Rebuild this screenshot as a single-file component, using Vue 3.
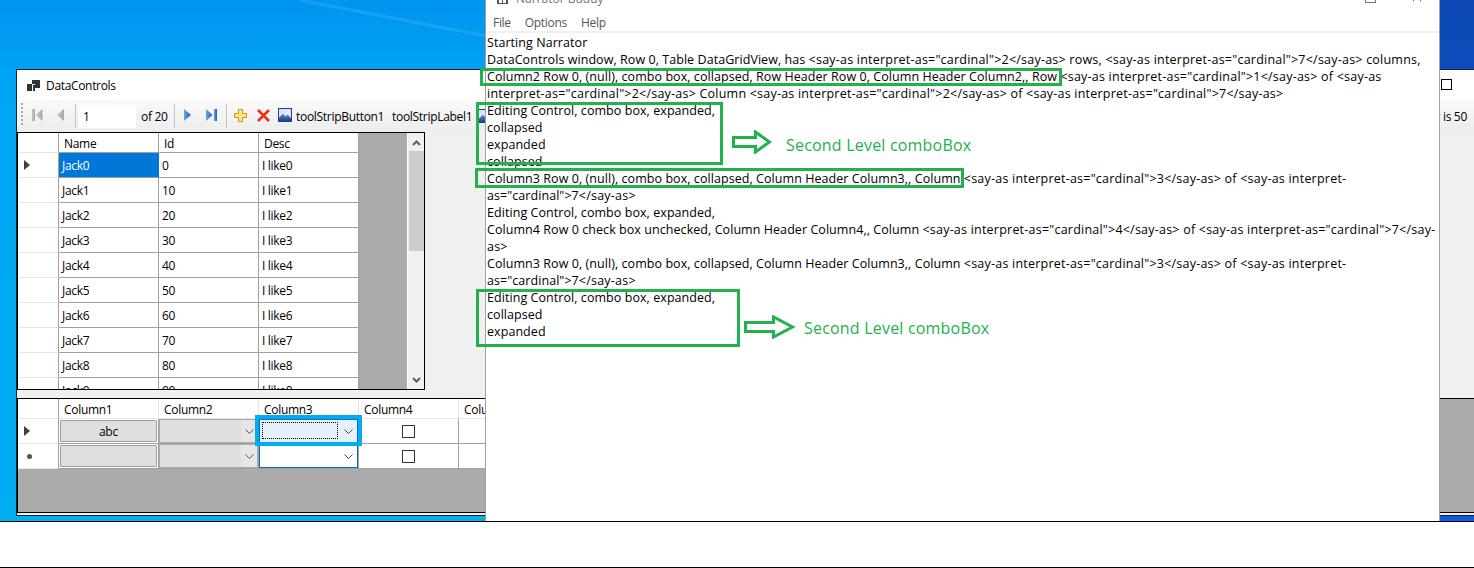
<script setup>
const rows = Array.from({ length: 10 }, (_, i) => ({ name: 'Jack' + i, id: String(i * 10), desc: 'I like' + i }))
const logA = [
  'Starting Narrator',
  'DataControls window, Row 0, Table DataGridView, has <say-as interpret-as="cardinal">2</say-as> rows, <say-as interpret-as="cardinal">7</say-as> columns,',
  'Column2 Row 0, (null), combo box, collapsed, Row Header Row 0, Column Header Column2,, Row <say-as interpret-as="cardinal">1</say-as> of <say-as',
  'interpret-as="cardinal">2</say-as> Column <say-as interpret-as="cardinal">2</say-as> of <say-as interpret-as="cardinal">7</say-as>',
  'Editing Control, combo box, expanded,',
  'collapsed',
  'expanded',
  'collapsed',
  'Column3 Row 0, (null), combo box, collapsed, Column Header Column3,, Column <say-as interpret-as="cardinal">3</say-as> of <say-as interpret-',
  'as="cardinal">7</say-as>',
  'Editing Control, combo box, expanded,',
  'Column4 Row 0 check box unchecked, Column Header Column4,, Column <say-as interpret-as="cardinal">4</say-as> of <say-as interpret-as="cardinal">7</say-',
  'as>',
  'Column3 Row 0, (null), combo box, collapsed, Column Header Column3,, Column <say-as interpret-as="cardinal">3</say-as> of <say-as interpret-',
  'as="cardinal">7</say-as>',
  'Editing Control, combo box, expanded,',
  'collapsed',
  'expanded'
]
// The markup fragments of the log run a little wider than its prose.
const logLines = logA.map((line) => {
  const at = line.indexOf('<')
  return at < 0 && !line.startsWith('as') && !line.startsWith('interpret')
    ? { prose: line, markup: '' }
    : { prose: at < 0 ? '' : line.slice(0, line.startsWith('interpret') ? 0 : at), markup: at < 0 ? line : line.slice(line.startsWith('interpret') ? 0 : at) }
})
</script>

<template>
  <div class="screen">
    <div class="desktop">
      <svg class="streak" width="486" height="60" viewBox="0 0 486 60"><path d="M300 0L486 36" stroke="#fff" stroke-opacity=".1" stroke-width="3" fill="none"/></svg>
      <section class="win data">
        <header class="title">
          <svg class="appicon" width="13" height="11" viewBox="0 0 13 11"><path d="M0 4h5v7H0zM5 0h8v8H8V4H5z" fill="#333"/><path d="M6 5h2v6H6z" fill="#333"/></svg>
          <span class="ttl">DataControls</span>
          <i class="topbox"></i>
        </header>
        <div class="strip">
          <svg width="0" height="0" class="defs"><defs>
            <linearGradient id="navblue" x1="0" y1="0" x2="1" y2="0"><stop offset="0" stop-color="#6aa6e8"/><stop offset="1" stop-color="#1a5cb8"/></linearGradient>
            <linearGradient id="navgrey" x1="0" y1="0" x2="1" y2="0"><stop offset="0" stop-color="#c4c4c4"/><stop offset="1" stop-color="#a8a8a8"/></linearGradient>
            <linearGradient id="sky" x1="0" y1="0" x2="0" y2="1"><stop offset="0" stop-color="#cfe0f5"/><stop offset="1" stop-color="#f4f8fd"/></linearGradient>
            <linearGradient id="hill" x1="0" y1="0" x2="0" y2="1"><stop offset="0" stop-color="#6d93c8"/><stop offset="1" stop-color="#1f3f86"/></linearGradient>
          </defs></svg>
          <i class="grip"></i>
          <svg class="tb first" width="11" height="12" viewBox="0 0 11 12"><path d="M0 0h3v12H0z" fill="url(#navgrey)"/><path d="M10.5 0v12L4 6z" fill="url(#navgrey)"/></svg>
          <svg class="tb prev" width="7" height="12" viewBox="0 0 7 12"><path d="M7 0v12L0 6z" fill="url(#navgrey)"/></svg>
          <i class="sep s1"></i>
          <span class="pos">1</span>
          <span class="of">of 20</span>
          <i class="sep s2"></i>
          <svg class="tb next" width="7" height="12" viewBox="0 0 7 12"><path d="M0 0v12l7-6z" fill="url(#navblue)"/></svg>
          <svg class="tb last" width="11" height="12" viewBox="0 0 11 12"><path d="M0 0v12l6.500-6z" fill="url(#navblue)"/><path d="M8 0h3v12H8z" fill="url(#navblue)"/></svg>
          <i class="sep s3"></i>
          <svg class="tb plus" width="13" height="13" viewBox="0 0 13 13"><path d="M4.500.5h4v4h4v4h-4v4h-4v-4h-4v-4h4z" fill="#fde58a" stroke="#cf9412"/></svg>
          <svg class="tb cross" width="13" height="13" viewBox="0 0 13 13"><path d="M1 1l11 11M12 1L1 12" stroke="#e8301c" stroke-width="2.700"/></svg>
          <svg class="tb pict" width="14" height="14" viewBox="0 0 14 14"><rect x=".5" y=".5" width="13" height="13" fill="url(#sky)" stroke="#1f3f86"/><path d="M1 13V9.500l4-4 2.500 3 2-2L13 10v3z" fill="url(#hill)"/><circle cx="10" cy="3.800" r="1.300" fill="#fff"/></svg>
          <span class="tl b1">toolStripButton1</span>
          <span class="tl l1">toolStripLabel1</span>
          <svg class="tb pict2" width="14" height="14" viewBox="0 0 14 14"><rect x=".5" y=".5" width="13" height="13" fill="url(#sky)" stroke="#1f3f86"/><path d="M1 13V9.500l4-4 2.500 3 2-2L13 10v3z" fill="url(#hill)"/></svg>
          <span class="counter">Counter is 50</span>
        </div>

        <div class="body">
          <div class="grid1">
            <div class="table1">
              <div class="cell rh hd"></div>
              <div class="cell hd">Name</div>
              <div class="cell hd">Id</div>
              <div class="cell hd">Desc</div>
              <template v-for="(r, i) in rows" :key="r.name">
                <div class="cell rh"><i v-if="i === 0" class="tri"></i></div>
                <div class="cell" :class="{ sel: i === 0 }">{{ r.name }}</div>
                <div class="cell">{{ r.id }}</div>
                <div class="cell">{{ r.desc }}</div>
              </template>
            </div>
            <div class="fill"></div>
            <div class="scroll">
              <svg class="chev" width="9" height="6" viewBox="0 0 9 6"><path d="M1 5l3.500-3.500L8 5" fill="none" stroke="#606060" stroke-width="2"/></svg>
              <i class="thumb"></i>
              <span class="flex"></span>
              <svg class="chev" width="9" height="6" viewBox="0 0 9 6"><path d="M1 1l3.500 3.500L8 1" fill="none" stroke="#606060" stroke-width="2"/></svg>
            </div>
          </div>

          <div class="grid2">
            <div class="table2">
              <div class="cell2 rh hd"></div>
              <div class="cell2 hd">Column1</div>
              <div class="cell2 hd">Column2</div>
              <div class="cell2 hd">Column3</div>
              <div class="cell2 hd">Column4</div>
              <div class="cell2 hd">Column5</div>

              <div class="cell2 rh"><i class="tri"></i></div>
              <div class="cell2 pad"><span class="btn">abc</span></div>
              <div class="cell2 pad0">
                <span class="cbgrey"><span class="cbarrow"><svg width="9" height="5" viewBox="0 0 9 5"><path d="M.5.500l4 4 4-4" fill="none" stroke="#555"/></svg></span></span>
              </div>
              <div class="cell2 pad0">
                <span class="cbblue on"><span class="dots"></span><svg width="9" height="5" viewBox="0 0 9 5"><path d="M.5.500l4 4 4-4" fill="none" stroke="#444"/></svg></span>
              </div>
              <div class="cell2 mid"><i class="check"></i></div>
              <div class="cell2"></div>

              <div class="cell2 rh"><i class="star"></i></div>
              <div class="cell2 pad"><span class="btn"></span></div>
              <div class="cell2 pad0">
                <span class="cbgrey"><span class="cbarrow"><svg width="9" height="5" viewBox="0 0 9 5"><path d="M.5.500l4 4 4-4" fill="none" stroke="#555"/></svg></span></span>
              </div>
              <div class="cell2 pad0">
                <span class="cbblue"><svg width="9" height="5" viewBox="0 0 9 5"><path d="M.5.500l4 4 4-4" fill="none" stroke="#444"/></svg></span>
              </div>
              <div class="cell2 mid"><i class="check"></i></div>
              <div class="cell2"></div>
            </div>
          </div>
        </div>
      </section>

      <div class="focusmark"></div>

      <section class="win narrator">
        <div class="ntitle">
          <svg class="nicon" width="11" height="8" viewBox="0 0 11 8"><path d="M0 0h11v8H0z" fill="#555"/><path d="M2 1h3v6H2zM6 1h3v6H6z" fill="#fff"/></svg>
          <span>Narrator Buddy</span>
          <i class="wmax"></i>
          <svg class="wclose" width="10" height="5" viewBox="0 0 10 5"><path d="M1-4l8 8M9-4l-8 8" stroke="#555" fill="none"/></svg>
        </div>
        <nav class="menu"><span>File</span><span>Options</span><span>Help</span></nav>
        <div class="log">
          <div v-for="(l, i) in logLines" :key="i" class="line">{{ l.prose }}<span class="markup">{{ l.markup }}</span></div>
        </div>

        <i class="gbox g1"></i>
        <i class="gbox g2"></i>
        <i class="gbox g3"></i>
        <i class="gbox g4"></i>
        <svg class="arrow a1" width="40" height="24" viewBox="0 0 40 24"><path d="M1.500 7.500h22V2l14 10-14 10v-5.500h-22z" fill="none" stroke="#22b14c" stroke-width="3"/></svg>
        <svg class="arrow a2" width="52" height="24" viewBox="0 0 52 24"><path d="M1.500 7.500h28V2l19 10-19 10v-5.500h-28z" fill="none" stroke="#22b14c" stroke-width="3"/></svg>
        <span class="lab l-a">Second Level comboBox</span>
        <span class="lab l-b">Second Level comboBox</span>
      </section>
    </div>
    <div class="below"></div>
  </div>
</template>

<style>
html, body { margin: 0; background: #fff; }
</style>

<style scoped>
.screen { width: 1474px; height: 568px; position: relative; overflow: hidden; font-family: "Open Sans", "Noto Sans", sans-serif; font-size: 12px; color: #000; background: #fff; }
.desktop { height: 521px; position: relative; overflow: hidden; border-bottom: 1px solid #000;
  background:
    linear-gradient(#0094ee, #00a4f5 15%, #00aef2) left top / 486px 100% no-repeat,
    linear-gradient(#0c49b5, #0a5ce4) right top / 40px 100% no-repeat,
    #0a5ce4; }
.streak { position: absolute; left: 0; top: 0; }
.below { height: 45px; border-bottom: 1px solid #000; background: #fff; }

.win { position: absolute; box-sizing: border-box; }
.data { left: 16px; top: 69px; width: 1460px; height: 447px; background: #f0f0f0; border: 1px solid #222; border-right: 0; display: flex; flex-direction: column; }
.title { height: 30px; background: #fff; display: flex; align-items: center; padding-left: 10px; flex: none; }
.appicon { margin-right: 6px; }
.ttl { letter-spacing: -.33px; }
.topbox { position: absolute; left: 1424px; top: 9px; width: 9px; height: 9px; border: 1px solid #000; }

.strip { height: 32px; flex: none; position: relative; background: linear-gradient(#f9f9f9, #ededed); }
.defs { position: absolute; }
.grip { position: absolute; left: 4px; top: 3px; width: 2px; height: 24px; background: repeating-linear-gradient(#aaa 0 2px, transparent 2px 4px); }
.tb { position: absolute; }
.first { left: 15px; top: 9px; }
.prev { left: 40px; top: 9px; }
.next { left: 167px; top: 9px; }
.last { left: 189px; top: 9px; }
.plus { left: 217px; top: 9px; }
.cross { left: 240px; top: 9px; }
.pict { left: 261px; top: 8px; }
.pict2 { left: 461px; top: 9px; }
.sep { position: absolute; top: 4px; width: 1px; height: 24px; background: #c4c4c4; }
.s1 { left: 58px; } .s2 { left: 157px; } .s3 { left: 209px; }
.pos { position: absolute; left: 62px; top: 5px; width: 53px; height: 23px; background: #fff; padding-left: 4px; line-height: 23px; }
.of { position: absolute; left: 124px; top: 5px; line-height: 23px; letter-spacing: -.3px; }
.tl { position: absolute; top: 5px; line-height: 23px; letter-spacing: -.3px; white-space: nowrap; }
.b1 { left: 279px; } .l1 { left: 375px; }
.counter { position: absolute; right: 9px; top: 5px; line-height: 23px; letter-spacing: -.3px; }

.body { flex: 1; display: flex; flex-direction: column; align-items: flex-start; min-height: 0; }
.grid1 { width: 408px; height: 258px; box-sizing: border-box; border: 1px solid #000; display: flex; overflow: hidden; background: #ababab; }
.table1 { display: grid; grid-template-columns: 40px 100px 100px 100px; grid-auto-rows: 25px; grid-template-rows: 20px; background: #fff; padding-left: 1px; flex: none; align-self: flex-start; }
.fill { flex: 1; }
.cell { box-sizing: border-box; border-right: 1px solid #a0a0a0; border-bottom: 1px solid #a0a0a0; padding-left: 3px; line-height: 25px; letter-spacing: -.3px; white-space: nowrap; overflow: hidden; background: #fff; }
.cell.hd { padding-left: 5px; line-height: 21px; border-color: #e4e4e4; border-bottom-color: #a0a0a0; border-right-color: #a0a0a0; }
.rh { border-color: #e4e4e4 !important; position: relative; border-right-color: #a0a0a0 !important; }
.sel { background: #0078d7; color: #fff; border-right-color: #0078d7; }
.tri { position: absolute; left: 5px; top: 7px; width: 0; height: 0; border-left: 6px solid #404040; border-top: 5px solid transparent; border-bottom: 5px solid transparent; }
.scroll { width: 17px; flex: none; background: #f0f0f0; display: flex; flex-direction: column; align-items: center; padding: 7px 0 6px; box-sizing: border-box; border-left: 1px solid #fff; }
.chev { flex: none; }
.thumb { width: 15px; height: 100px; background: #cdcdcd; margin-top: 5px; }
.flex { flex: 1; }

.grid2 { margin-top: 8px; box-sizing: border-box; width: 100%; height: 115px; border: 1px solid #000; border-right: 0; background: #ababab; overflow: hidden; }
.table2 { display: grid; grid-template-columns: 40px 100px 100px 100px 100px 100px; grid-template-rows: 20px 25px 25px; background: #fff; width: 540px; padding-left: 1px; }
.cell2 { box-sizing: border-box; border-right: 1px solid #a0a0a0; border-bottom: 1px solid #a0a0a0; background: #fff; white-space: nowrap; overflow: hidden; position: relative; }
.cell2.hd { padding-left: 5px; line-height: 21px; letter-spacing: -.3px; border-bottom-color: #e4e4e4; border-right-color: #e4e4e4; }
.pad { padding: 1px; }
.btn { display: block; height: 100%; box-sizing: border-box; background: #dfdfdf; border: 1px solid #a0a0a0; border-radius: 1px; text-align: center; line-height: 22px; letter-spacing: -.2px; }
.pad0 { padding: 0; }
.cbgrey { display: flex; justify-content: flex-end; height: 100%; background: #dfdfdf; box-sizing: border-box; border: 1px solid #ababab; }
.cbarrow { width: 16px; background: #e6e6e6; display: flex; align-items: center; justify-content: center; }
.cbblue { display: flex; align-items: center; justify-content: flex-end; height: 100%; box-sizing: border-box; border: 1px solid #0d6cbf; padding-right: 4px; }
.cbblue.on { background: #e5f1fb; position: relative; }
.dots { position: absolute; left: 2px; top: 2px; width: 76px; height: 17px; box-sizing: border-box; border: 1px dotted #000; }
.mid { display: flex; align-items: center; justify-content: center; }
.check { width: 11px; height: 11px; border: 1px solid #333; }
.star { position: absolute; left: 8px; top: 10px; width: 5px; height: 5px; border-radius: 50%; background: #555; }

.focusmark { position: absolute; left: 255px; top: 415px; width: 107px; height: 31px; box-sizing: border-box; border: 4px solid #00aeef; }

.narrator { left: 485px; top: 0; width: 955px; height: 521px; background: #fff; border-left: 1px solid #a0a0a0; border-right: 1px solid #a0a0a0; }
.ntitle { position: absolute; left: 0; top: -10px; height: 14px; width: 100%; color: #777; display: flex; align-items: center; }
.nicon { position: absolute; left: 11px; top: 6px; }
.ntitle span { position: absolute; left: 30px; top: 0; }
.wmax { position: absolute; left: 879px; top: 0; width: 9px; height: 11px; border: 1px solid #777; }
.wclose { position: absolute; left: 926px; top: 7px; }
.menu { position: absolute; left: 7px; top: 14px; display: flex; gap: 14px; color: #555; line-height: 17px; letter-spacing: -.3px; }
.log { position: absolute; left: 1px; right: 0; top: 31px; border-top: 2px solid #f0f0f0; padding-top: 1px; }
.line { height: 17px; line-height: 17px; white-space: nowrap; font-size: 12.5px; letter-spacing: .06px; }
.markup { letter-spacing: .22px; }
.gbox { position: absolute; box-sizing: border-box; border: 3px solid #22b14c; }
.g1 { left: -6px; top: 68px; width: 582px; height: 18px; }
.g2 { left: -10px; top: 102px; width: 247px; height: 63px; }
.g3 { left: -11px; top: 168px; width: 489px; height: 20px; }
.g4 { left: -10px; top: 289px; width: 264px; height: 58px; }
.arrow { position: absolute; }
.a1 { left: 246px; top: 130px; }
.a2 { left: 258px; top: 315px; }
.lab { position: absolute; color: #22b14c; font-size: 16px; line-height: 20px; white-space: nowrap; letter-spacing: .2px; }
.l-a { left: 300px; top: 135px; }
.l-b { left: 318px; top: 318px; }
</style>
